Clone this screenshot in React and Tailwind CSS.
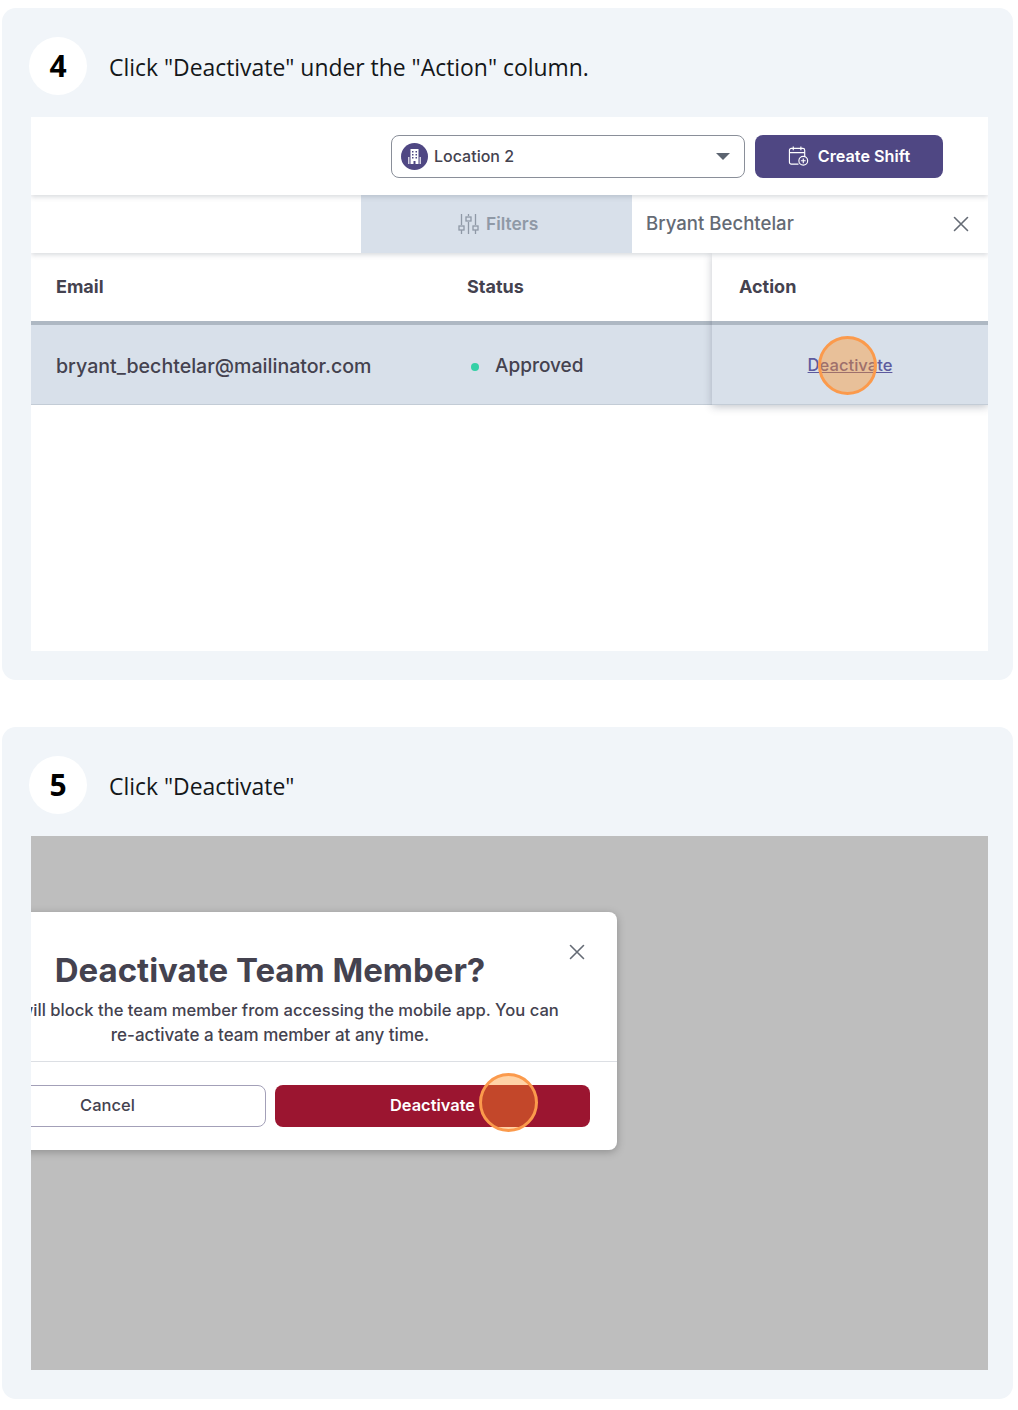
import React from 'react';

const poppins = "font-['Inter',sans-serif]";

const Step = ({ num, label, children }) => (
  <div className="w-[1011px] h-[672px] ml-[2px] rounded-[14px] bg-[#f1f5f9] pl-[27px] pt-[29px] font-['Open_Sans',sans-serif]">
    <div className="flex items-center h-[58px]">
      <div className="w-[58px] h-[58px] rounded-full bg-white flex items-center justify-center pb-[2px] text-[30px] font-bold text-black">{num}</div>
      <div className="ml-[22px] mt-[5px] text-[22.9px] text-[#14171a]">{label}</div>
    </div>
    {children}
  </div>
);

const Tap = ({ className }) => (
  <div className={`absolute w-[59px] h-[59px] rounded-full border-[3px] border-[#fb9a4c] bg-[#ff9120]/40 ${className}`}></div>
);

const XIcon = ({ size, color }) => (
  <svg width={size} height={size} viewBox="0 0 16 16" fill="none" stroke={color} strokeWidth="1.6" strokeLinecap="round">
    <path d="M1.5 1.5l13 13M14.5 1.5l-13 13" />
  </svg>
);

const BuildingIcon = () => (
  <div className="w-[27px] h-[27px] rounded-full bg-[#4f4783] flex items-center justify-center">
    <svg width="17" height="17" viewBox="0 0 17 17" fill="white">
      <path d="M4.5 1h8v15h-3v-3h-2v3h-3z" />
      <path d="M2 9h1.5v7H2zM13.5 9H15v7h-1.5z" opacity="0.75" />
      <g fill="#4f4783">
        <rect x="6" y="3" width="1.5" height="1.5" />
        <rect x="9.5" y="3" width="1.5" height="1.5" />
        <rect x="6" y="6" width="1.5" height="1.5" />
        <rect x="9.5" y="6" width="1.5" height="1.5" />
        <rect x="6" y="9" width="1.5" height="1.5" />
        <rect x="9.5" y="9" width="1.5" height="1.5" />
      </g>
    </svg>
  </div>
);

const CalendarIcon = () => (
  <svg width="21" height="22" viewBox="0 0 22 22" fill="none" stroke="white" strokeWidth="1.2">
    <path d="M11 19.5H3.5a2 2 0 0 1-2-2V5a2 2 0 0 1 2-2h12a2 2 0 0 1 2 2v6" />
    <path d="M1.5 7.5h16M5.5 1v4M13.5 1v4" />
    <circle cx="16" cy="16" r="4.6" />
    <path d="M16 13.5v5M13.5 16h5" />
  </svg>
);

const FiltersIcon = () => (
  <svg width="21" height="22" viewBox="0 0 21 22" fill="none" stroke="#8f99a6" strokeWidth="1.3">
    <path d="M3.5 1v11M3.5 17v4M10.5 1v2M10.5 9v12M17.5 1v11M17.5 17v4" />
    <rect x="1" y="13" width="5" height="4" />
    <rect x="8" y="4" width="5" height="4" />
    <rect x="15" y="13" width="5" height="4" />
  </svg>
);

export default function App() {
  return (
    <div className="w-[1018px] h-[1410px] bg-white pt-[8px] flex flex-col gap-[47px]">
      <Step num="4" label={'Click "Deactivate" under the "Action" column.'}>
        <div className={`relative w-[957px] h-[534px] ml-[2px] mt-[22px] bg-white overflow-hidden ${poppins}`}>
          <div className="relative z-20 h-[78px] flex items-center pl-[360px] bg-white shadow-[0_2px_5px_rgba(60,70,90,0.2)]">
            <div className="w-[354px] h-[43px] rounded-[8px] border border-[#8a8f99] flex items-center pl-[9px] pr-[14px]">
              <BuildingIcon />
              <span className="ml-[6px] text-[16px] font-medium text-[#44424f]">Location 2</span>
              <div className="ml-auto w-0 h-0 border-x-[7px] border-x-transparent border-t-[7px] border-t-[#5c6470]"></div>
            </div>
            <div className="ml-[10px] w-[188px] h-[43px] rounded-[8px] bg-[#4f4783] flex items-center justify-center gap-[9px] text-white text-[16.2px] font-semibold">
              <CalendarIcon />
              <span>Create Shift</span>
            </div>
          </div>
          <div className="relative z-10 h-[58px] flex bg-white shadow-[0_2px_5px_rgba(60,70,90,0.2)]">
            <div className="w-[330px]"></div>
            <div className="w-[271px] bg-[#d8e0ea] pl-[97px] flex items-center gap-[7px] text-[#8f99a6] text-[17.4px] font-semibold">
              <FiltersIcon />
              <span>Filters</span>
            </div>
            <div className="flex-1 flex items-center justify-between pl-[14px] pr-[19px] text-[18.6px] font-medium text-[#656b75]">
              <span>Bryant Bechtelar</span>
              <XIcon size={16} color="#656b75" />
            </div>
          </div>
          <div className="relative flex">
            <div className="w-[681px]">
              <div className="h-[66px] flex items-center pb-[2px] border-b-[4px] border-[#aeb8c3] box-content text-[18px] font-bold text-[#44424f]">
                <div className="w-[436px] pl-[25px]">Email</div>
                <div>Status</div>
              </div>
              <div className="h-[80px] flex items-center pt-[4px] bg-[#d8e0ea] border-b border-[#c3ccd6] text-[19px] font-medium text-[#44424f]">
                <div className="w-[412px] pl-[25px] text-[19.6px] whitespace-nowrap">bryant_bechtelar@mailinator.com</div>
                <div className="w-[8px] h-[8px] ml-[28px] rounded-full bg-[#34d0a6]"></div>
                <div className="ml-[16px]">Approved</div>
              </div>
            </div>
            <div className="relative w-[276px] shadow-[0_2px_8px_rgba(60,70,90,0.3)]">
              <div className="h-[66px] flex items-center pb-[2px] pl-[27px] border-b-[4px] border-[#aeb8c3] box-content text-[18px] font-bold text-[#44424f]">Action</div>
              <div className="h-[80px] flex items-center justify-center pt-[2px] bg-[#d8e0ea] border-b border-[#c3ccd6] text-[16.6px] font-medium text-[#5d5a9e] underline">Deactivate</div>
            </div>
          </div>
          <Tap className="z-30 left-[787px] top-[219px]" />
        </div>
      </Step>

      <Step num="5" label={'Click "Deactivate"'}>
        <div className={`relative w-[957px] h-[534px] ml-[2px] mt-[22px] bg-[#bebebe] overflow-hidden pt-[76px] ${poppins}`}>
          <div className="relative w-[694px] h-[238px] ml-[-108px] rounded-[8px] bg-white shadow-[0_2px_8px_rgba(0,0,0,0.25)]">
            <div className="absolute right-[32px] top-[32px]">
              <XIcon size={16} color="#656b75" />
            </div>
            <div className="h-[150px] border-b border-[#dcdfe4] flex flex-col items-center pt-[38px]">
              <div className="text-[33px] leading-[40px] font-bold text-[#44424f] whitespace-nowrap">Deactivate Team Member?</div>
              <div className="mt-[8px] text-[16.6px] leading-[25px] font-medium text-[#44424f] text-center whitespace-nowrap">
                This will block the team member from accessing the mobile app. You can
                <br />
                <span className="text-[17px]">re-activate a team member at any time.</span>
              </div>
            </div>
            <div className="flex gap-[9px] pl-[28px] pt-[23px]">
              <div className="w-[315px] h-[42px] rounded-[8px] border border-[#a3a0b8] flex items-center justify-center pb-[2px] pr-[2px] text-[16.5px] font-medium text-[#44424f]">Cancel</div>
              <div className="w-[315px] h-[42px] rounded-[8px] bg-[#9b1530] flex items-center justify-center pb-[2px] text-[16.4px] font-semibold text-white">Deactivate</div>
            </div>
          </div>
          <Tap className="left-[448px] top-[237px]" />
        </div>
      </Step>
    </div>
  );
}
